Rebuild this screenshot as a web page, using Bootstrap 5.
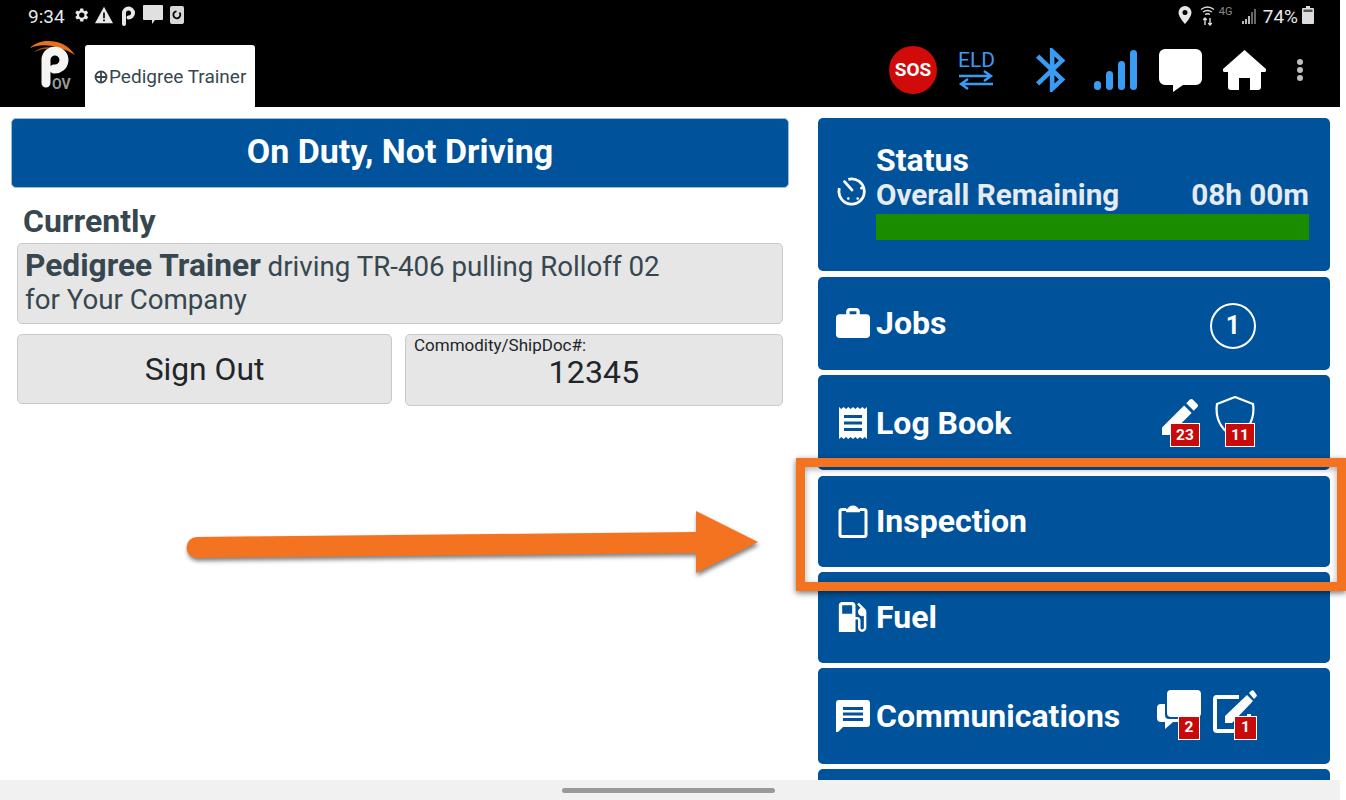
<!DOCTYPE html>
<html lang="en">
<head>
    <meta charset="UTF-8">
    <title>Pedigree Trainer</title>
    <link href="https://cdn.jsdelivr.net/npm/bootstrap@5.3.3/dist/css/bootstrap.min.css" rel="stylesheet">
    <style>
        body {
            background: #fff;
            font-family: Roboto, "Liberation Sans", sans-serif;
            overflow: hidden;
        }
        .app-screen { width: 1340px; height: 800px; position: relative; }
        .top-head { background: #000; height: 107px; }
        .sys-bar { height: 45px; padding: 6px 26px 0 28px; color: #e8e8e8; }
        .sys-time { font-size: 19px; line-height: 22px; margin-right: 7px; }
        .sys-pct { font-size: 19px; line-height: 22px; }
        .net-tag { font-size: 11px; line-height: 12px; color: #8a8a8a; margin-right: 3px; width: 20px; }
        .tab-row { height: 62px; }
        .app-logo { width: 57px; margin-left: 28px; }
        .user-tab {
            width: 170px; height: 62px; background: #fff; color: #37474f;
            font-size: 19px; border-radius: 3px 3px 0 0; padding: 18px 0 0 9px;
        }
        .tool-group { padding-right: 36px; margin-top: 1px; }
        .sos-dot {
            width: 48px; height: 48px; border-radius: 50%; background: #d10a0a; color: #fff;
            font-weight: 700; font-size: 19px; margin-right: 21px;
        }
        .eld-mark { width: 38px; color: #3a9bf4; margin-right: 40px; line-height: 1; }
        .eld-mark span { font-size: 21px; display: block; height: 20px; }
        .main-area { height: 673px; overflow: hidden; }
        .left-pane { width: 818px; padding: 11px 30px 0 12px; color: #37474f; }
        .duty-bar {
            background: #00539b; color: #fff; height: 70px; font-size: 34px; font-weight: 700;
            border: 1px solid #9dbad6; border-radius: 5px; margin: 0 -1px 0 -1px; padding-bottom: 4px;
        }
        .now-title { font-size: 32px; font-weight: 700; margin: 15px 0 4px 11px; line-height: 36px; }
        .grey-box { background: #e6e6e6; border: 1px solid #c9c9c9; border-radius: 5px; }
        .now-box {
            height: 81px; margin: 0 5px 10px; padding: 5px 7px; font-size: 27.7px; line-height: 33px;
        }
        .now-box b { font-size: 31.7px; }
        .sign-box { width: 375px; height: 70px; font-size: 31.8px; color: #212529; margin-right: 13px; padding-top: 2px; }
        .ship-box { width: 378px; height: 72px; padding: 0 8px; color: #212529; }
        .ship-label { font-size: 17px; line-height: 20px; }
        .ship-num { font-size: 32px; line-height: 36px; text-align: center; margin-top: -1px; letter-spacing: .2px; }
        .right-pane { width: 512px; padding-top: 11px; }
        .menu-tile {
            background: #00539b; color: #fff; border-radius: 5px; margin-bottom: 5.4px;
            padding-left: 18px; font-size: 32px; font-weight: 700; position: relative;
        }
        .tile-icon { width: 34px; margin-right: 6px; flex: none; }
        .clock-icon { margin-top: -7px; }
        .h-status { height: 153.4px; }
        .h-jobs { height: 93px; }
        .h-log { height: 95px; }
        .h-insp { height: 91px; }
        .h-fuel { height: 90.6px; }
        .h-comm { height: 96px; }
        .h-more { height: 40px; }
        .status-body { width: 433px; margin-top: -8px; }
        .status-name { line-height: 36px; }
        .status-line { line-height: 34px; font-size: 29.7px; color: #e6eaf1; }
        .status-track { height: 26px; background: #1a8c00; margin-top: 2px; }
        .jobs-count {
            position: absolute; left: 392px; top: 26px; width: 46px; height: 46px; border: 2px solid #fff;
            border-radius: 50%; font-size: 25px; font-weight: 700;
        }
        .tile-glyph { position: absolute; }
        .red-count {
            position: absolute; background: #c80a0a; border: 1px solid #fff; color: #fff;
            font-size: 15.5px; font-weight: 700; height: 24px;
        }
        .bottom-strip { background: #f1f1f1; height: 20px; }
        .home-pill { width: 213px; height: 5px; background: #999; border-radius: 3px; margin-left: -3px; }
        .focus-frame {
            position: absolute; left: 796px; top: 458px; width: 550px; height: 133px;
            border: 9px solid #f37321; box-shadow: 0 2px 6px rgba(0,0,0,.55), inset 0 2px 6px rgba(0,0,0,.35);
        }
        .point-arrow {
            position: absolute; left: 180px; top: 505px;
            filter: drop-shadow(1px 3px 2px rgba(0,0,0,.5));
        }
    </style>
</head>
<body>
<div class="app-screen">
    <div class="top-head">
        <div class="sys-bar d-flex align-items-start">
            <span class="sys-time">9:34</span>
            <svg width="18" height="18" viewBox="0 0 24 24" fill="#e8e8e8" style="margin-right:3px"><path d="M19.4 13a7.5 7.5 0 0 0 0-2l2.100-1.600-2-3.500-2.500 1a7.500 7.500 0 0 0-1.700-1L15 3.200h-4l-.4 2.700a7.500 7.500 0 0 0-1.700 1l-2.500-1-2 3.500L6.500 11a7.500 7.500 0 0 0 0 2l-2.100 1.600 2 3.500 2.500-1a7.500 7.500 0 0 0 1.700 1l.4 2.700h4l.4-2.700a7.500 7.500 0 0 0 1.700-1l2.500 1 2-3.500zM13 15.500a3.500 3.500 0 1 1 0-7 3.500 3.500 0 0 1 0 7z"/></svg>
            <svg width="22" height="18" viewBox="0 0 24 22" style="margin-right:6px"><path d="M12 1 1 21h22z" fill="#e8e8e8"/><path d="M11 8h2v7h-2zM11 16.500h2v2h-2z" fill="#000"/></svg>
            <svg width="15" height="20" viewBox="0 0 15 20" style="margin-right:7px"><path d="M3 18V7a4.500 4.500 0 1 1 4.500 4.500" fill="none" stroke="#e8e8e8" stroke-width="4" stroke-linecap="round"/></svg>
            <svg width="20" height="20" viewBox="0 0 20 20" style="margin-right:7px;margin-top:-1px"><path d="M1 0h18a1 1 0 0 1 1 1v13a1 1 0 0 1-1 1h-7l-3 4v-4H1a1 1 0 0 1-1-1V1a1 1 0 0 1 1-1z" fill="#e0e0e0"/></svg>
            <svg width="14" height="18" viewBox="0 0 14 18"><rect width="14" height="18" rx="2" fill="#d8d8d8"/><path d="M9.500 6.500a3.500 3.500 0 1 1-3-1.200" fill="none" stroke="#000" stroke-width="1.800"/></svg>
            <div class="ms-auto d-flex align-items-start">
                <svg width="14" height="18" viewBox="0 0 14 18" style="margin-right:8px"><path d="M7 0a6.500 6.500 0 0 0-6.500 6.500C.5 11 7 18 7 18s6.500-7 6.500-11.500A6.500 6.500 0 0 0 7 0zm0 9a2.500 2.500 0 1 1 0-5 2.500 2.500 0 0 1 0 5z" fill="#e8e8e8"/></svg>
                <svg width="15" height="20" viewBox="0 0 15 20" style="margin-right:4px" fill="none" stroke="#ddd" stroke-width="1.400"><path d="M1 3.500c4-3 9-3 13 0M3 6c3-2 6-2 9 0M5 8.500c1.500-1 3.500-1 5 0"/><path d="M5 12v7M3.200 14 5 12l1.800 2M10 19v-7M8.200 17l1.800 2 1.800-2"/></svg>
                <span class="net-tag">4G</span>
                <svg width="15" height="18" viewBox="0 0 15 18" style="margin-right:6px;margin-top:2px" fill="#bbb"><rect x="0" y="13" width="2" height="3"/><rect x="3" y="11" width="2" height="5"/><rect x="6" y="8" width="2" height="8"/><rect x="9" y="4" width="2" height="12" fill="#666"/><rect x="12" y="1" width="2" height="15" fill="#666"/></svg>
                <span class="sys-pct" style="margin-right:4px">74%</span>
                <svg width="12" height="18" viewBox="0 0 12 18"><path d="M4 0h4v2h3a1 1 0 0 1 1 1v14a1 1 0 0 1-1 1H1a1 1 0 0 1-1-1V3a1 1 0 0 1 1-1h3z" fill="#ddd"/><path d="M1.500 3.500h9V6h-9z" fill="#555"/></svg>
            </div>
        </div>
        <div class="tab-row d-flex align-items-start">
            <div class="app-logo">
                <svg width="46" height="52" viewBox="0 0 46 52" style="margin-top:-5px;display:block;margin-left:2px">
                    <path d="M0 8C8-2 34-3 45 15 32 7 14 2 0 8z" fill="#e8701a"/>
                    <path d="M4 12C10 7 18 6 26 9 18 8 10 9 4 12z" fill="#a84c10"/>
                    <path d="M16 43V19a9 9 0 1 1 8 10" fill="none" stroke="#f4f4f4" stroke-width="9" stroke-linecap="round"/>
                    <text x="22" y="49" font-size="14" font-weight="700" fill="#9a9a9a" font-family="Roboto, sans-serif">OV</text>
                </svg>
            </div>
            <div class="user-tab d-flex align-items-start">
                <svg width="14" height="14" viewBox="0 0 14 14" style="margin:7px 1px 0 0;flex:none" fill="none" stroke="#37474f" stroke-width="1.800"><circle cx="7" cy="7" r="5.500"/><path d="M7 2v10M2 7h10"/></svg>
                <span>Pedigree Trainer</span>
            </div>
            <div class="tool-group ms-auto d-flex align-items-center">
                <div class="sos-dot d-flex align-items-center justify-content-center">SOS</div>
                <div class="eld-mark">
                    <span>ELD</span>
                    <svg width="36" height="20" viewBox="0 0 36 20" fill="none" stroke="#3a9bf4" stroke-width="2.400" style="display:block"><path d="M1 6h32M26 1l7 5-7 5M35 14H3M10 9l-7 5 7 5"/></svg>
                </div>
                <svg width="30" height="44" viewBox="5 2 13 20" preserveAspectRatio="none" fill="#3a9bf4" style="margin-right:28px"><path d="M17.710 7.710L12 2h-1v7.590L6.410 5 5 6.410 10.590 12 5 17.590 6.410 19 11 14.410V22h1l5.710-5.710-4.300-4.290 4.300-4.290zM13 5.830l1.880 1.880L13 9.590V5.830zm1.880 10.460L13 18.170v-3.760l1.880 1.880z"/></svg>
                <svg width="43" height="40" viewBox="0 0 43 40" fill="#3a9bf4" style="margin-right:22px"><rect x="0" y="31" width="7" height="9" rx="3.500"/><rect x="12" y="21" width="7" height="19" rx="3.500"/><rect x="24" y="11" width="7" height="29" rx="3.500"/><rect x="36" y="0" width="7" height="40" rx="3.500"/></svg>
                <svg width="43" height="43" viewBox="0 0 43 43" fill="#fff" style="margin-right:21px"><path d="M6 0h31a6 6 0 0 1 6 6v24a6 6 0 0 1-6 6H24l-10 7v-7H6a6 6 0 0 1-6-6V6a6 6 0 0 1 6-6z"/></svg>
                <svg width="43" height="40" viewBox="0 0 43 40" fill="#fff" style="margin-right:30px"><path d="M21.500 0 43 19c1 1.500 0 3-1.500 3H38v15a3 3 0 0 1-3 3h-8V28h-11v12H8a3 3 0 0 1-3-3V22H1.500C0 22-1 20.500 0 19z"/></svg>
                <svg width="8" height="24" viewBox="0 0 8 24" fill="#bdbdbd"><circle cx="4" cy="4" r="3"/><circle cx="4" cy="12" r="3"/><circle cx="4" cy="20" r="3"/></svg>
            </div>
        </div>
    </div>

    <div class="main-area d-flex">
        <div class="left-pane">
            <div class="duty-bar d-flex align-items-center justify-content-center">On Duty, Not Driving</div>
            <div class="now-title">Currently</div>
            <div class="grey-box now-box">
                <b>Pedigree Trainer</b> driving TR-406 pulling Rolloff 02<br>for Your Company
            </div>
            <div class="d-flex align-items-start" style="margin-left:5px">
                <div class="grey-box sign-box d-flex align-items-center justify-content-center">Sign Out</div>
                <div class="grey-box ship-box">
                    <div class="ship-label">Commodity/ShipDoc#:</div>
                    <div class="ship-num">12345</div>
                </div>
            </div>
        </div>

        <div class="right-pane">
            <div class="menu-tile h-status d-flex align-items-center">
                <svg class="tile-icon clock-icon" height="30" viewBox="0 0 34 32" fill="none" stroke="#fff" stroke-width="3"><path d="M12 3.500a13.500 13.500 0 1 1-9.500 9.500"/><path d="M8 6l8 9" stroke-linecap="round"/><circle cx="26" cy="13" r=".7" fill="#fff" stroke-width="1.500"/><circle cx="22" cy="24" r=".7" fill="#fff" stroke-width="1.500"/><circle cx="12" cy="24" r=".7" fill="#fff" stroke-width="1.500"/></svg>
                <div class="status-body">
                    <div class="status-name">Status</div>
                    <div class="status-line d-flex justify-content-between"><span>Overall Remaining</span><span>08h 00m</span></div>
                    <div class="status-track"></div>
                </div>
            </div>

            <div class="menu-tile h-jobs d-flex align-items-center">
                <svg class="tile-icon" height="30" viewBox="2 2 20 19" preserveAspectRatio="none" fill="#fff"><path d="M20 6h-4V4c0-1.110-.89-2-2-2h-4c-1.110 0-2 .89-2 2v2H4c-1.110 0-1.990.89-1.990 2L2 19c0 1.110.89 2 2 2h16c1.110 0 2-.89 2-2V8c0-1.110-.89-2-2-2zm-6 0h-4V4h4v2z"/></svg>
                <span>Jobs</span>
                <div class="jobs-count d-flex align-items-center justify-content-center">1</div>
            </div>

            <div class="menu-tile h-log d-flex align-items-center">
                <svg class="tile-icon" height="32" viewBox="0 0 34 32"><path d="M3 0l2.300 2L7.700 0 10 2l2.300-2 2.300 2L17 0l2.300 2 2.400-2L24 2l2.300-2 2.400 2L31 0v32l-2.300-2-2.400 2L24 30l-2.300 2-2.400-2L17 32l-2.400-2-2.300 2-2.300-2-2.300 2-2.400-2L3 32z" fill="#fff"/><path d="M8 8h18v3H8zM8 14.500h18v3H8zM8 21h18v3H8z" fill="#00539b"/></svg>
                <span>Log Book</span>
                <svg class="tile-glyph" style="left:344px;top:24px" width="36" height="36" viewBox="3 3 18 18" fill="#fff"><path d="M3 17.250V21h3.750L17.810 9.940l-3.750-3.750L3 17.250zM20.710 7.040c.39-.39.39-1.020 0-1.410l-2.340-2.340c-.39-.39-1.020-.39-1.410 0l-1.830 1.830 3.750 3.750 1.830-1.830z"/></svg>
                <div class="red-count d-flex align-items-center justify-content-center" style="left:352px;top:48px;width:30px">23</div>
                <svg class="tile-glyph" style="left:397px;top:21px" width="40" height="44" viewBox="0 0 40 44" fill="none" stroke="#fff" stroke-width="2.200"><path d="M20 1 38 8c2 14-4 26-18 34C6 34 0 22 2 8z"/></svg>
                <div class="red-count d-flex align-items-center justify-content-center" style="left:407px;top:48px;width:30px">11</div>
            </div>

            <div class="menu-tile h-insp d-flex align-items-center">
                <svg class="tile-icon" height="33" viewBox="0 0 34 32" fill="none" stroke="#fff" stroke-width="3"><path d="M10 4H6a2 2 0 0 0-2 2v23a2 2 0 0 0 2 2h22a2 2 0 0 0 2-2V6a2 2 0 0 0-2-2h-4"/><path d="M10 5h14" stroke-width="3.500"/><path d="M12 4a5 3.500 0 0 1 10 0z" fill="#fff" stroke-width="1"/></svg>
                <span>Inspection</span>
            </div>

            <div class="menu-tile h-fuel d-flex align-items-center">
                <svg class="tile-icon" height="30" viewBox="4 3 17 18" fill="#fff"><path d="M19.770 7.230l.01-.01-3.720-3.720L15 4.560l2.110 2.110c-.94.36-1.610 1.260-1.610 2.330 0 1.380 1.120 2.500 2.500 2.500.36 0 .69-.08 1-.21v7.210c0 .55-.45 1-1 1s-1-.45-1-1V14c0-1.100-.9-2-2-2h-1V5c0-1.100-.9-2-2-2H6c-1.100 0-2 .9-2 2v16h10v-7.500h1.500v5c0 1.380 1.120 2.500 2.500 2.500s2.500-1.120 2.500-2.500V9c0-.69-.28-1.320-.73-1.770zM12 10H6V5h6v5z"/></svg>
                <span>Fuel</span>
            </div>

            <div class="menu-tile h-comm d-flex align-items-center">
                <svg class="tile-icon" height="32" viewBox="0 0 34 32"><path d="M3 0h28a3 3 0 0 1 3 3v21a3 3 0 0 1-3 3H7l-7 7V3a3 3 0 0 1 3-3z" fill="#fff"/><path d="M7 7h20v3H7zM7 12.500h20v3H7zM7 18h20v3H7z" fill="#00539b"/></svg>
                <span>Communications</span>
                <svg class="tile-glyph" style="left:339px;top:22px" width="44" height="44" viewBox="0 0 44 44" fill="#fff"><path d="M14 0h26a4 4 0 0 1 4 4v19a4 4 0 0 1-4 4H14a4 4 0 0 1-4-4V4a4 4 0 0 1 4-4z"/><path d="M4 14h4v11a4 4 0 0 0 4 4h18a3 3 0 0 1-3 3H16l-8 7v-7H4a4 4 0 0 1-4-4V18a4 4 0 0 1 4-4z"/></svg>
                <div class="red-count d-flex align-items-center justify-content-center" style="left:360px;top:48px;width:22px">2</div>
                <svg class="tile-glyph" style="left:395px;top:22px" width="44" height="44" viewBox="0 0 44 44" fill="none" stroke="#fff" stroke-width="4"><path d="M26 7H4a2 2 0 0 0-2 2v30a2 2 0 0 0 2 2h30a2 2 0 0 0 2-2V24"/><path d="M12 33V26L34 5l6 6-21 22z" fill="#fff" stroke="none"/><path d="M36 3l2-2a2 2 0 0 1 3 0l2 3a2 2 0 0 1 0 3l-2 2z" fill="#fff" stroke="none"/></svg>
                <div class="red-count d-flex align-items-center justify-content-center" style="left:416px;top:48px;width:23px">1</div>
            </div>

            <div class="menu-tile h-more"></div>
        </div>
    </div>

    <div class="bottom-strip d-flex align-items-center justify-content-center">
        <div class="home-pill"></div>
    </div>
</div>

<div class="focus-frame"></div>
<svg class="point-arrow" width="585" height="75" viewBox="0 0 585 75">
    <path d="M17 32 516 27V6l62 31-62 31V48L17 53a10.500 10.500 0 0 1 0-21z" fill="#f37321"/>
</svg>

<script src="https://cdn.jsdelivr.net/npm/bootstrap@5.3.3/dist/js/bootstrap.bundle.min.js"></script>
</body>
</html>
